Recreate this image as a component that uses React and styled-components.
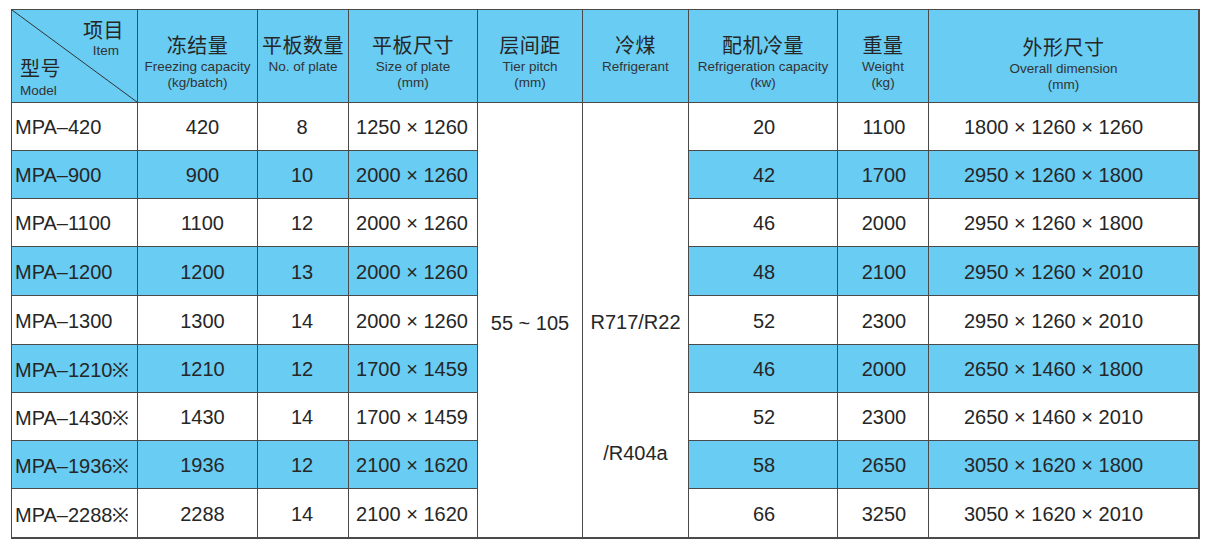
import React from 'react'
import styled, { createGlobalStyle } from 'styled-components'

const GlobalStyle = createGlobalStyle`
  html, body {
    margin: 0;
    padding: 0;
    background: #fff;
  }
  body {
    font-family: "Liberation Sans", Arial, sans-serif;
    color: #262626;
  }
`

const BLUE = '#68ccf3'
const LINE = '#4a4a4a'

const Page = styled.div`
  padding: 9px 0 0 11px;
`

const Grid = styled.div`
  display: grid;
  grid-template-columns: 125px 119px 90px 128px 104px 105px 148px 90px 269px;
  grid-template-rows: 92px 47px 47px 47px 48px 48px 47px 47px 47px 48px;
  gap: 1px;
  width: max-content;
  background: ${LINE};
  border: 1px solid ${LINE};
  border-right-width: 2px;
  border-bottom-width: 2px;
`

const HeadCell = styled.div`
  background: ${BLUE};
  display: flex;
  flex-direction: column;
  align-items: center;
  padding-top: ${(p) => (p.$low ? '23px' : '21px')};
  text-align: center;
  overflow: hidden;
`

const Zh = styled.div`
  font-family: "Noto Sans CJK SC", "Noto Sans", sans-serif;
  font-size: 20px;
  line-height: ${(p) => (p.$tight ? '26px' : '28px')};
  color: #262626;
  letter-spacing: 0.5px;
  white-space: nowrap;
`

const En = styled.div`
  font-size: 13.5px;
  line-height: 16px;
  color: #333;
  white-space: nowrap;
`

const CornerCell = styled.div`
  background: ${BLUE};
  position: relative;
  overflow: hidden;
`

const Diagonal = styled.svg`
  position: absolute;
  inset: 0;
  width: 100%;
  height: 100%;
`

const CornerLabel = styled.div`
  position: absolute;
  display: flex;
  flex-direction: column;
  align-items: ${(p) => (p.$right ? 'flex-end' : 'flex-start')};
  ${(p) => (p.$right ? 'top: 7px; right: 13px;' : 'top: 45px; left: 8px;')}
`

const Cell = styled.div`
  background: ${(p) => (p.$blue ? BLUE : '#fff')};
  display: flex;
  align-items: center;
  justify-content: ${(p) => (p.$left ? 'flex-start' : 'center')};
  padding-left: ${(p) => (p.$left ? '3px' : `${Math.max(p.$shift || 0, 0) * 2}px`)};
  padding-right: ${(p) => `${Math.max(-(p.$shift || 0), 0) * 2}px`};
  padding-top: 2px;
  font-size: 20px;
  white-space: nowrap;
`

const MergedCell = styled.div`
  grid-column: ${(p) => p.$col};
  grid-row: 2 / span 9;
  background: #fff;
  display: flex;
  flex-direction: column;
  align-items: center;
  justify-content: ${(p) => (p.$top ? 'flex-start' : 'center')};
  padding-top: ${(p) => (p.$top ? '207px' : '5px')};
  gap: 107px;
  font-size: 20px;
  white-space: nowrap;
`

const Line = styled.span`
  line-height: 24px;
`

const headers = [
  { zh: '冻结量', en: ['Freezing capacity', '(kg/batch)'] },
  { zh: '平板数量', en: ['No. of plate'] },
  { zh: '平板尺寸', en: ['Size of plate', '(mm)'] },
  { zh: '层间距', en: ['Tier pitch', '(mm)'] },
  { zh: '冷煤', en: ['Refrigerant'] },
  { zh: '配机冷量', en: ['Refrigeration capacity', '(kw)'] },
  { zh: '重量', en: ['Weight', '(kg)'] },
  { zh: '外形尺寸', en: ['Overall dimension', '(mm)'], low: true },
]

// grid column and horizontal text shift for each data value
const cols = [
  { col: 1, left: true },
  { col: 2, shift: 5 },
  { col: 3, shift: -1 },
  { col: 4, shift: -1 },
  { col: 7, shift: 1 },
  { col: 8, shift: 1 },
  { col: 9, shift: -10 },
]

const rows = [
  ['MPA–420', '420', '8', '1250 × 1260', '20', '1100', '1800 × 1260 × 1260'],
  ['MPA–900', '900', '10', '2000 × 1260', '42', '1700', '2950 × 1260 × 1800'],
  ['MPA–1100', '1100', '12', '2000 × 1260', '46', '2000', '2950 × 1260 × 1800'],
  ['MPA–1200', '1200', '13', '2000 × 1260', '48', '2100', '2950 × 1260 × 2010'],
  ['MPA–1300', '1300', '14', '2000 × 1260', '52', '2300', '2950 × 1260 × 2010'],
  ['MPA–1210※', '1210', '12', '1700 × 1459', '46', '2000', '2650 × 1460 × 1800'],
  ['MPA–1430※', '1430', '14', '1700 × 1459', '52', '2300', '2650 × 1460 × 2010'],
  ['MPA–1936※', '1936', '12', '2100 × 1620', '58', '2650', '3050 × 1620 × 1800'],
  ['MPA–2288※', '2288', '14', '2100 × 1620', '66', '3250', '3050 × 1620 × 2010'],
]

export default function App() {
  return (
    <Page>
      <GlobalStyle />
      <Grid>
        <CornerCell>
          <Diagonal viewBox="0 0 125 92" preserveAspectRatio="none">
            <line x1="0" y1="0" x2="125" y2="92" stroke="#333" strokeWidth="1" />
          </Diagonal>
          <CornerLabel $right>
            <Zh $tight>项目</Zh>
            <En style={{ marginRight: 5 }}>Item</En>
          </CornerLabel>
          <CornerLabel>
            <Zh $tight>型号</Zh>
            <En style={{ marginTop: 2 }}>Model</En>
          </CornerLabel>
        </CornerCell>
        {headers.map((h) => (
          <HeadCell key={h.zh} $low={h.low}>
            <Zh>{h.zh}</Zh>
            {h.en.map((t) => (
              <En key={t}>{t}</En>
            ))}
          </HeadCell>
        ))}

        <MergedCell $col="5 / 6">
          <Line>55 ~ 105</Line>
        </MergedCell>
        <MergedCell $col="6 / 7" $top>
          <Line>R717/R22</Line>
          <Line>/R404a</Line>
        </MergedCell>

        {rows.map((r, i) => {
          const blue = i % 2 === 1
          const row = i + 2
          return (
            <React.Fragment key={r[0]}>
              {r.map((v, j) => (
                <Cell
                  key={j}
                  $blue={blue}
                  $left={cols[j].left}
                  $shift={cols[j].shift}
                  style={{ gridRow: row, gridColumn: cols[j].col }}
                >
                  {v}
                </Cell>
              ))}
            </React.Fragment>
          )
        })}
      </Grid>
    </Page>
  )
}
